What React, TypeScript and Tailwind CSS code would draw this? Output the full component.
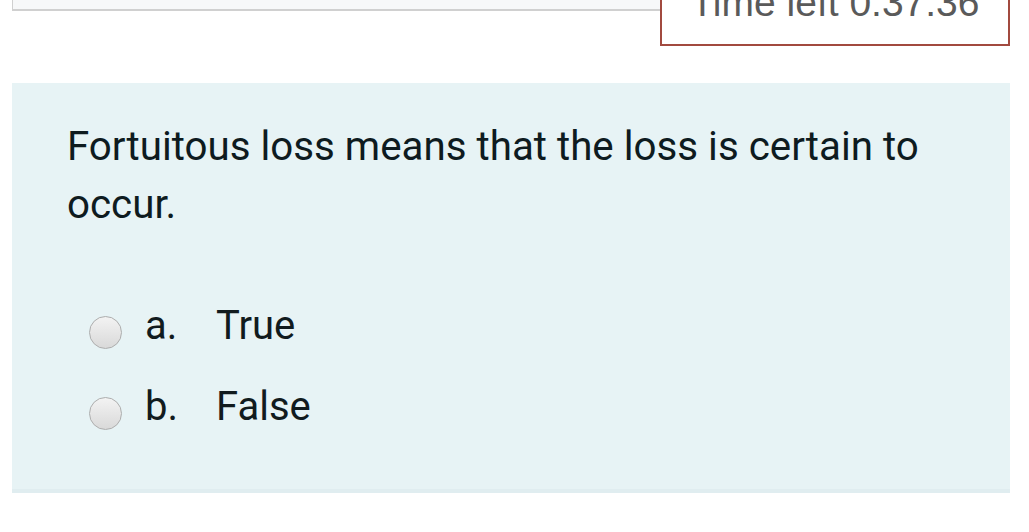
import React from "react";

const options = [
  { letter: "a.", label: "True" },
  { letter: "b.", label: "False" },
];

function Radio() {
  return (
    <span className="mt-[19px] ml-[22px] h-[33px] w-[33px] flex-shrink-0 rounded-full border border-[#adadad] bg-gradient-to-b from-[#f3f3f3] to-[#d9d9d9]" />
  );
}

export default function App() {
  return (
    <div className="h-[532px] w-[1029px] overflow-hidden bg-white font-['Roboto',sans-serif]">
      {/* Top bar: nav box + countdown */}
      <div className="ml-[12px] flex w-[998px] items-start">
        <div className="h-[11px] flex-1 border-b-2 border-l border-[#d0d0d0] bg-[#f7f8f9]" />
        <div className="h-[46px] w-[350px] overflow-hidden border-2 border-t-0 border-[#a24a3f] bg-white">
          <div className="-mt-[17px] text-center font-['Liberation_Sans',Arial,sans-serif] text-[39px] leading-none text-[#5a5a5a]">
            Time left 0:37:36
          </div>
        </div>
      </div>

      {/* Question panel */}
      <div className="mt-[37px] ml-[12px] w-[998px] border-b-4 border-[#e0edf0] bg-[#e7f3f5] pt-[35px] pb-[53px] pl-[55px] pr-[40px]">
        <p className="text-[40.3px] leading-[58px] text-[#0e1b1f]">
          Fortuitous loss means that the loss is certain to occur.
        </p>

        <div className="mt-[63px] flex flex-col gap-[23px]">
          {options.map((o) => (
            <label key={o.letter} className="flex items-start">
              <Radio />
              <span className="ml-[23px] w-[71px] text-[40px] leading-[58px] text-[#111b1e]">{o.letter}</span>
              <span className="text-[40px] leading-[58px] text-[#111b1e]">{o.label}</span>
            </label>
          ))}
        </div>
      </div>
    </div>
  );
}
